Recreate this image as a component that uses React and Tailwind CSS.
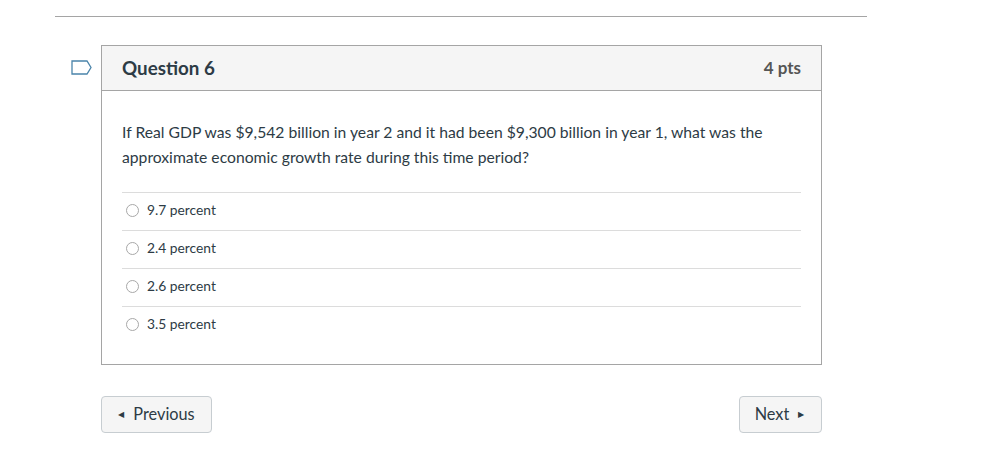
const answers = ['9.7 percent', '2.4 percent', '2.6 percent', '3.5 percent']

const App = () => {
  return (
    <div className="min-h-[463px] w-[994px] bg-white text-[#2d3b45]" style={{ fontFamily: 'Lato, "Open Sans", sans-serif' }}>
      <div className="pt-4 pl-[55px]">
        <div className="h-px w-[812px] bg-[#a5a5a5]" />
      </div>
      <div className="mt-7 flex">
        <div className="flex w-[101px] justify-end pr-[8px] pt-[15px]">
          <svg width="21" height="15" viewBox="0 0 21 15" className="mr-[1px]">
            <path d="M1 1 H16 L20 7.5 L16 14 H1 Z" fill="none" stroke="#4a84aa" strokeWidth="1.3" />
          </svg>
        </div>
        <div className="w-[721px] border border-[#a5a5a5]">
          <div className="flex h-[45px] items-center justify-between border-b border-[#a5a5a5] bg-[#f5f5f5] pl-5 pr-5">
            <h2 className="text-[18.8px] font-bold text-[#2d3b45]">Question 6</h2>
            <span className="text-[17px] font-bold text-[#555]">4 pts</span>
          </div>
          <div className="px-5 pt-[29px] pb-[20px]">
            <p className="text-[15.7px] leading-[25px] text-[#2d3b45]">
              If Real GDP was $9,542 billion in year 2 and it had been $9,300 billion in year 1, what was the approximate economic growth rate during this time period?
            </p>
            <div className="mt-[22px]">
              {answers.map((a) => (
                <div key={a} className="flex h-[38px] items-center border-t border-[#dcdcdc] pb-[2px] pl-[4px]">
                  <span className="h-[13px] w-[13px] rounded-full border border-[#a8a8a8]" />
                  <span className="ml-[8px] text-[13.8px] text-[#2d3b45]">{a}</span>
                </div>
              ))}
            </div>
          </div>
        </div>
      </div>
      <div className="mt-[31px] flex w-[822px] justify-between pl-[101px]">
        <button className="flex h-[37px] w-[111px] items-center justify-center gap-[9px] rounded border border-[#c7cdd1] bg-[#f5f5f5] pb-px text-[16.3px] text-[#2d3b45]">
          <span className="text-[8px]">◀</span>Previous
        </button>
        <button className="flex h-[37px] w-[83px] items-center justify-center gap-[9px] rounded border border-[#c7cdd1] bg-[#f5f5f5] pb-px pr-[2px] text-[16.3px] text-[#2d3b45]">
          Next<span className="text-[8px]">▶</span>
        </button>
      </div>
    </div>
  )
}

export default App
